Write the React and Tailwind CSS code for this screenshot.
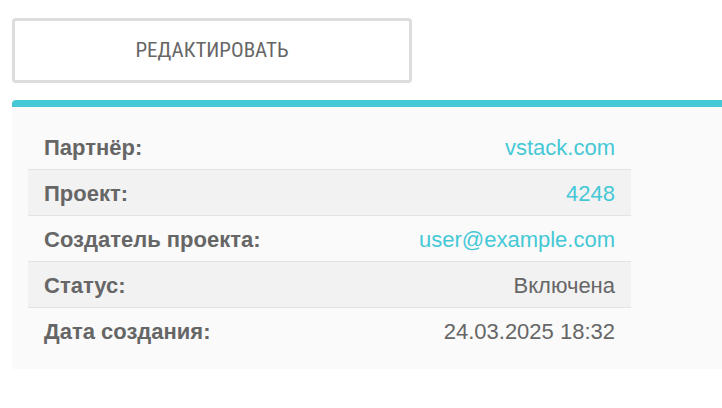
const rows = [
  { label: "Партнёр:", value: "vstack.com", link: true },
  { label: "Проект:", value: "4248", link: true },
  { label: "Создатель проекта:", value: "user@example.com", link: true },
  { label: "Статус:", value: "Включена" },
  { label: "Дата создания:", value: "24.03.2025 18:32" },
];

export default function App() {
  return (
    <div className="min-h-screen bg-white pl-3 pt-[18px] font-['Liberation_Sans',Arial,sans-serif]">
      <button className="flex h-[65px] w-[400px] items-center justify-center rounded-[4px] border-[3px] border-[#dddddd] bg-white pt-[1px] font-['Roboto',sans-serif] text-[21px] font-normal font-stretch-condensed text-[#666666]">
        РЕДАКТИРОВАТЬ
      </button>

      <div className="mt-[17px] w-[730px] rounded-t-[4px] border-t-[7px] border-[#45c8d6] bg-[#fafafa] px-4 py-4">
        <div className="w-[603px]">
          {rows.map((row, i) => (
            <div
              key={row.label}
              className={
                "flex h-[46px] items-center justify-between px-4 pt-[2px] text-[22px] " +
                (i % 2 === 1 ? "bg-[#f2f2f2] " : "") +
                (i > 0 ? "border-t border-[#e3e3e3]" : "")
              }
            >
              <span className="font-bold text-[#666666]">{row.label}</span>
              <span className={row.link ? "text-[#45c8d6]" : "text-[#666666]"}>
                {row.value}
              </span>
            </div>
          ))}
        </div>
      </div>
    </div>
  );
}
